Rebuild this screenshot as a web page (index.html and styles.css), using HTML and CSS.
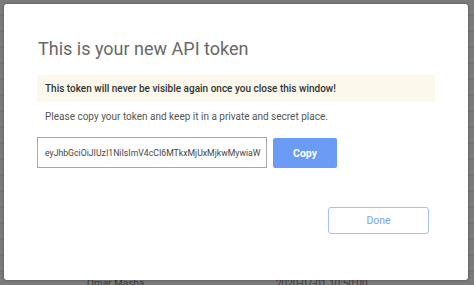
FILE: index.html
```html
<!DOCTYPE html>
<html>
<head>
<meta charset="utf-8">
<link rel="stylesheet" href="styles.css">
</head>
<body>
<div class="backdrop">
  <div class="bg-row"><span class="bg-name">Omar Masha</span><span class="bg-date">2020-07-01 10:50:00</span></div>
</div>
<div class="modal">
  <h1 class="title">This is your new API token</h1>
  <div class="warning">This token will never be visible again once you close this window!</div>
  <p class="note">Please copy your token and keep it in a private and secret place.</p>
  <div class="token-row">
    <div class="token-input">eyJhbGciOiJIUzI1NiIsImV4cCI6MTkxMjUxMjkwMywiaW</div>
    <button class="btn-copy">Copy</button>
  </div>
  <div class="actions">
    <button class="btn-done">Done</button>
  </div>
</div>
</body>
</html>
```
FILE: styles.css
```css
html, body {
  margin: 0;
  padding: 0;
  width: 474px;
  height: 285px;
  overflow: hidden;
  background: #7b7b7b;
  font-family: Roboto, "Liberation Sans", sans-serif;
}
body {
  position: relative;
  background-image: repeating-linear-gradient(to bottom, transparent 0, transparent 15px, #737373 15px, #737373 16px);
}
.backdrop {
  position: absolute;
  left: 0;
  top: 0;
  width: 474px;
  height: 285px;
}
.bg-row {
  position: absolute;
  top: 278px;
  left: 0;
  width: 474px;
  font-size: 10px;
  color: #3a3a3a;
}
.bg-name { position: absolute; left: 87px; }
.bg-date { position: absolute; left: 276px; }
.modal {
  position: absolute;
  left: 4px;
  top: 4px;
  width: 464px;
  height: 276px;
  box-sizing: border-box;
  background: #fff;
  border-radius: 3px;
  box-shadow: 0 0 3px rgba(0,0,0,0.35);
  padding: 35px 33px 0 33px;
  display: flex;
  flex-direction: column;
}
.title {
  margin: 0 0 0 1px;
  font-size: 18px;
  font-weight: 400;
  color: #686868;
  line-height: 20px;
}
.warning {
  margin-top: 16px;
  height: 27px;
  background: #fcf9ec;
  display: flex;
  align-items: center;
  padding-left: 8px;
  font-size: 10px;
  font-weight: 500;
  color: #333;
}
.note {
  margin: 8px 0 0 8px;
  font-size: 10px;
  color: #555;
  line-height: 14px;
}
.token-row {
  margin-top: 13px;
  display: flex;
  gap: 6px;
  align-items: flex-start;
}
.token-input {
  width: 230px;
  height: 31px;
  box-sizing: border-box;
  border: 1px solid #a8a8a8;
  display: flex;
  align-items: center;
  padding-left: 7px;
  font-size: 8.7px;
  color: #444;
  white-space: nowrap;
  overflow: hidden;
}
.btn-copy {
  margin-top: 1px;
  width: 64px;
  height: 30px;
  border: none;
  border-radius: 2px;
  background: #6a9bf5;
  color: #fff;
  font-family: Roboto, "Liberation Sans", sans-serif;
  font-size: 10.5px;
  font-weight: 700;
  padding: 0;
}
.actions {
  margin-top: 39px;
  display: flex;
  justify-content: flex-end;
  padding-right: 6px;
}
.btn-done {
  width: 101px;
  height: 27px;
  box-sizing: border-box;
  border: 1px solid #a6c0f4;
  border-radius: 3px;
  background: #fff;
  color: #7ba1ee;
  font-family: Roboto, "Liberation Sans", sans-serif;
  font-size: 10.5px;
  padding: 0;
}
```
